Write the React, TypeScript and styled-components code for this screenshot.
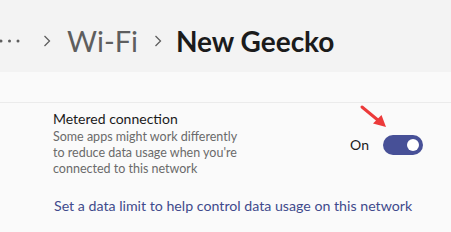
import React from "react";
import styled, { createGlobalStyle } from "styled-components";

const Global = createGlobalStyle`
  html, body { margin: 0; padding: 0; background: #fafafa; }
  body { width: 451px; height: 232px; overflow: hidden; font-family: "Lato", "Noto Sans", sans-serif; }
`;

const Page = styled.div`
  display: flex;
  flex-direction: column;
  width: 451px;
  height: 232px;
  background: #fafafa;
`;

const Header = styled.header`
  flex: none;
  height: 72px;
  background: #f3f3f3;
  display: flex;
  align-items: center;
  padding-top: 9px;
  box-sizing: border-box;
`;

const Crumb = styled.span<{ $current?: boolean }>`
  font-size: ${(p) => (p.$current ? 28 : 29)}px;
  font-weight: ${(p) => (p.$current ? 700 : 400)};
  color: ${(p) => (p.$current ? "#1b1b1b" : "#5e5e5e")};
  line-height: 1;
`;

const Sep = styled.svg<{ $lead: number }>`
  display: block;
  width: 8px;
  height: 12px;
  margin: 0 ${(p) => (p.$lead > 20 ? 16 : 14)}px 0 ${(p) => p.$lead}px;
`;

const Dots = styled.svg`
  display: block;
  width: 22px;
  height: 6px;
  margin-left: -1px;
`;

const Divider = styled.div`
  flex: none;
  margin-top: 30px;
  height: 1px;
  background: #ebebeb;
`;

const Row = styled.div`
  display: flex;
  align-items: center;
  padding: 6px 28px 0 53px;
`;

const TextCol = styled.div`
  flex: 1;
  display: flex;
  flex-direction: column;
`;

const Title = styled.div`
  font-size: 14px;
  color: #1b1b1b;
  line-height: 20px;
`;

const Desc = styled.div`
  font-size: 12.5px;
  color: #6a6a6a;
  line-height: 16px;
  width: 195px;
`;

const Control = styled.div`
  position: relative;
  display: flex;
  align-items: center;
  gap: 14px;
  margin-top: 3px;
`;

const State = styled.span`
  font-size: 14px;
  color: #1b1b1b;
`;

const Toggle = styled.div`
  width: 40px;
  height: 20px;
  border-radius: 10px;
  background: #475097;
  display: flex;
  align-items: center;
  justify-content: flex-end;
  padding: 0 4px;
  box-sizing: border-box;
`;

const Knob = styled.div`
  width: 12px;
  height: 12px;
  border-radius: 50%;
  background: #ffffff;
`;

const Arrow = styled.svg`
  position: absolute;
  left: 10px;
  top: -30px;
  width: 30px;
  height: 30px;
  overflow: visible;
`;

const Link = styled.a`
  display: block;
  margin: 20px 0 0 54px;
  font-size: 14.2px;
  color: #3f4a8c;
  text-decoration: none;
`;

const chevron = "M1.5 1 L6.5 6 L1.5 11";

export default function App() {
  return (
    <Page>
      <Global />
      <Header>
        <Dots viewBox="0 0 22 6">
          <circle cx="2" cy="3" r="1.5" fill="#5e5e5e" />
          <circle cx="10.5" cy="3" r="1.5" fill="#5e5e5e" />
          <circle cx="19" cy="3" r="1.5" fill="#5e5e5e" />
        </Dots>
        <Sep $lead={22} viewBox="0 0 8 12">
          <path d={chevron} stroke="#5e5e5e" strokeWidth="1.3" fill="none" />
        </Sep>
        <Crumb>Wi-Fi</Crumb>
        <Sep $lead={16} viewBox="0 0 8 12">
          <path d={chevron} stroke="#5e5e5e" strokeWidth="1.3" fill="none" />
        </Sep>
        <Crumb $current>New Geecko</Crumb>
      </Header>
      <Divider />
      <Row>
        <TextCol>
          <Title>Metered connection</Title>
          <Desc>Some apps might work differently to reduce data usage when you're connected to this network</Desc>
        </TextCol>
        <Control>
          <State>On</State>
          <Toggle>
            <Knob />
          </Toggle>
          <Arrow viewBox="0 0 30 30">
            <line x1="2" y1="2" x2="19" y2="16" stroke="#ec3a3a" strokeWidth="3" strokeLinecap="round" />
            <polygon points="26,22 13,18.5 21.5,10" fill="#ec3a3a" />
          </Arrow>
        </Control>
      </Row>
      <Link>Set a data limit to help control data usage on this network</Link>
    </Page>
  );
}
